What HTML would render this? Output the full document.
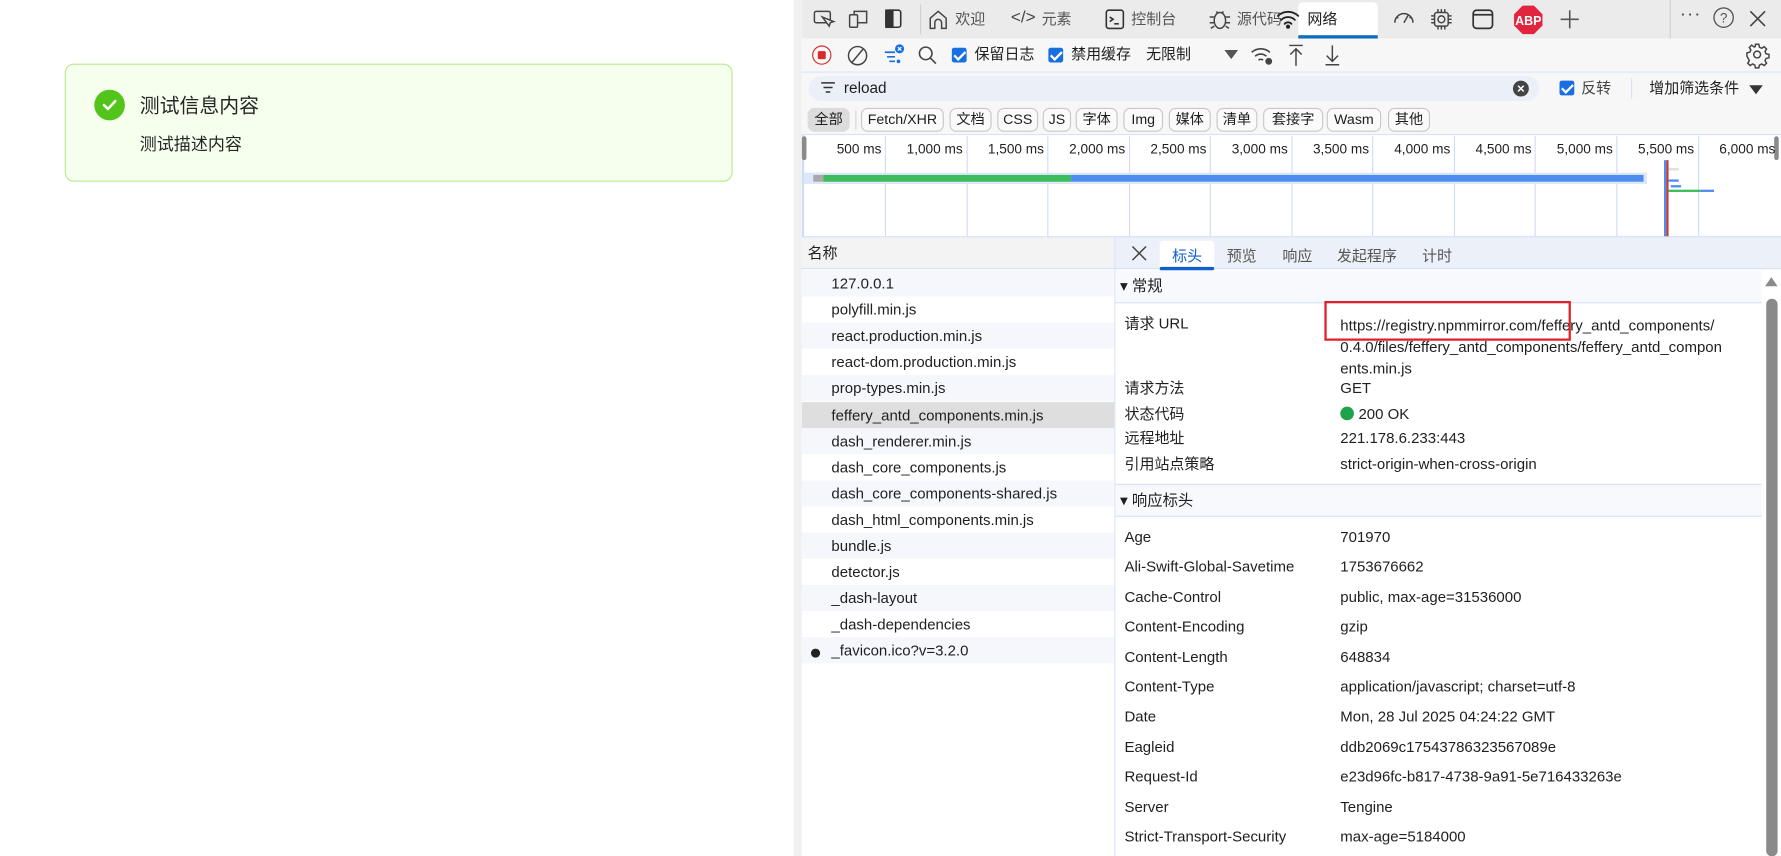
<!DOCTYPE html>
<html><head><meta charset="utf-8">
<style>
*{margin:0;padding:0;box-sizing:border-box}
html,body{width:1781px;height:856px;overflow:hidden;background:#fff}
body{font-family:"Liberation Sans","Noto Sans CJK SC",sans-serif;color:#1f1f1f}
#root{position:absolute;left:0;top:0;width:1568px;height:754px;transform:scale(1.13584);transform-origin:0 0;font-size:13.2px;line-height:16px}
.a{position:absolute}
.t{position:absolute;white-space:nowrap;line-height:16px}
svg{position:absolute;overflow:visible}
.chip{position:absolute;top:95px;height:21px;border:1px solid #c8c8c8;border-radius:6px;background:#fafafa;font-size:12.5px;line-height:19px;text-align:center}
.row{position:absolute;left:706px;width:275px;height:23px;line-height:23px;padding-left:26px}
.dl{position:absolute;left:990px;line-height:16px;white-space:nowrap}
.dv{position:absolute;left:1180px;white-space:nowrap;line-height:16px}
.cb{position:absolute;width:13px;height:13px;border-radius:2px;background:#1a6fe0}
.cb:after{content:"";position:absolute;left:4px;top:1px;width:4px;height:8px;border:solid #fff;border-width:0 2px 2px 0;transform:rotate(45deg)}
</style></head><body><div id="root">
<div class="a" style="left:0;top:0;width:699px;height:754px;background:#fff;border-radius:0 10px 0 0"></div>
<div class="a" style="left:699px;top:0;width:7px;height:754px;background:#f0f0f0"></div>
<div class="a" style="left:57px;top:56px;width:588px;height:104px;background:#f6ffed;border:1px solid #b7eb8f;border-radius:8px"></div>
<div class="a" style="left:83px;top:79px;width:27px;height:27px;border-radius:50%;background:#52c41a"></div>
<svg style="left:83px;top:79px" width="27" height="27"><path d="M8.5 13.5l3.5 3.5 6.5-7" stroke="#fff" stroke-width="2.2" fill="none" stroke-linecap="round" stroke-linejoin="round"/></svg>
<div class="t" style="left:123px;top:83px;font-size:17.5px;line-height:20px;color:#262626">测试信息内容</div>
<div class="t" style="left:123px;top:119px;font-size:15px;line-height:18px;color:#262626">测试描述内容</div>

<div class="a" style="left:706px;top:0;width:862px;height:754px;background:#fff"></div>
<div class="a" style="left:706px;top:0;width:862px;height:34px;background:#ebebeb"></div>
<div class="a" style="left:810px;top:4px;width:1px;height:26px;background:#cfcfcf"></div>
<div class="a" style="left:1470px;top:0;width:1px;height:34px;background:#cfcfcf"></div>
<div class="a" style="left:1143px;top:2px;width:70px;height:32px;background:#fff;border-radius:4px 4px 0 0"></div>
<div class="a" style="left:1143px;top:31px;width:70px;height:3px;background:#0f6cbd"></div>
<svg style="left:716px;top:9px" width="18" height="16" fill="none" stroke="#444" stroke-width="1.3"><rect x="1" y="1" width="14" height="10" rx="1.5"/><path d="M8 6l6 8 1-3 3-1z" fill="#ebebeb"/></svg>
<svg style="left:747px;top:8px" width="18" height="18" fill="none" stroke="#444" stroke-width="1.3"><rect x="1" y="5" width="7" height="11" rx="1"/><path d="M5 5V2h11v10h-8"/></svg>
<svg style="left:779px;top:8px" width="16" height="18" fill="none" stroke="#333" stroke-width="1.4"><rect x="1" y="1" width="13" height="15" rx="2"/><rect x="1" y="1" width="6" height="15" fill="#333"/></svg>
<svg style="left:817px;top:8px" width="18" height="18" fill="none" stroke="#444" stroke-width="1.3"><path d="M2 8L9 2l7 6v9h-4v-5a3 3 0 0 0-6 0v5H2z"/></svg>
<div class="t" style="left:841px;top:9px;color:#555">欢迎</div>
<div class="t" style="left:890px;top:8px;color:#444;font-size:15px">&lt;/&gt;</div>
<div class="t" style="left:917px;top:9px;color:#555">元素</div>
<svg style="left:973px;top:8px" width="17" height="18" fill="none" stroke="#333" stroke-width="1.4"><rect x="1" y="1" width="15" height="16" rx="2"/><path d="M4 7l3 2-3 2M8 13h4"/></svg>
<div class="t" style="left:996px;top:9px;color:#555">控制台</div>
<svg style="left:1064px;top:7px" width="20" height="20" fill="none" stroke="#444" stroke-width="1.3"><ellipse cx="10" cy="11" rx="5" ry="7"/><path d="M7 3l1 2M13 3l-1 2M1 8h4M15 8h4M1 13h4M15 13h4M2 18l3-2M18 18l-3-2"/></svg>
<div class="t" style="left:1089px;top:9px;color:#555">源代码</div>
<svg style="left:1124px;top:9px" width="20" height="16" fill="none" stroke="#222" stroke-width="1.6" stroke-linecap="round"><path d="M1 5a13 13 0 0 1 18 0M4 8.5a8.5 8.5 0 0 1 12 0M7 12a4 4 0 0 1 6 0"/><circle cx="10" cy="14.5" r="1" fill="#222"/></svg>
<div class="t" style="left:1151px;top:9px;color:#222">网络</div>
<svg style="left:1226px;top:9px" width="20" height="14" fill="none" stroke="#444" stroke-width="1.3"><path d="M2 11A8 8 0 0 1 18 11M10 11l4-7M4 6l1 1M16 6l-1 1"/></svg>
<svg style="left:1259px;top:7px" width="20" height="20" fill="none" stroke="#444" stroke-width="1.3"><rect x="4" y="4" width="12" height="12" rx="2"/><circle cx="10" cy="10" r="3"/><path d="M7 1v3M10 1v3M13 1v3M7 16v3M10 16v3M13 16v3M1 7h3M1 10h3M1 13h3M16 7h3M16 10h3M16 13h3"/></svg>
<svg style="left:1296px;top:8px" width="19" height="18" fill="none" stroke="#333" stroke-width="1.5"><rect x="1" y="1" width="17" height="16" rx="3"/><path d="M1 5h17"/></svg>
<svg style="left:1333px;top:5px" width="25" height="25"><polygon points="7.5,0 17.5,0 25,7.5 25,17.5 17.5,25 7.5,25 0,17.5 0,7.5" fill="#e1253f"/><text x="12.5" y="17" font-family="Liberation Sans" font-weight="bold" font-size="11" fill="#fff" text-anchor="middle">ABP</text></svg>
<svg style="left:1374px;top:9px" width="16" height="16" stroke="#555" stroke-width="1.4"><path d="M8 0v16M0 8h16"/></svg>
<div class="t" style="left:1479px;top:5px;font-size:16px;color:#444;letter-spacing:1px">···</div>
<svg style="left:1508px;top:6px" width="19" height="19" fill="none" stroke="#555" stroke-width="1.2"><circle cx="9.5" cy="9.5" r="8.5"/><text x="9.5" y="14" font-size="12" text-anchor="middle" fill="#555" stroke="none" font-family="Liberation Sans">?</text></svg>
<svg style="left:1540px;top:9px" width="15" height="15" stroke="#444" stroke-width="1.4"><path d="M1 1l13 13M14 1L1 14"/></svg>

<div class="a" style="left:706px;top:34px;width:862px;height:30px;background:#f7f7f7;border-bottom:1px solid #d6e2fb"></div>
<div class="a" style="left:715px;top:40px;width:17px;height:17px;border-radius:50%;border:1.6px solid #d92b2b"></div>
<div class="a" style="left:720px;top:45px;width:7px;height:7px;background:#d92b2b;border-radius:1px"></div>
<svg style="left:746px;top:40px" width="18" height="18" fill="none" stroke="#444" stroke-width="1.3"><circle cx="9" cy="9" r="8"/><path d="M4 15L14 3"/></svg>
<svg style="left:778px;top:38px" width="20" height="20" fill="none" stroke="#1a6fe0" stroke-width="1.5"><path d="M1 8h9M3 12h7M5 16h5"/><circle cx="14" cy="5" r="4" fill="#1a6fe0" stroke="none"/><path d="M12.5 3.5l3 3M15.5 3.5l-3 3" stroke="#fff" stroke-width="1.1"/><circle cx="13" cy="16" r="1.6" fill="#1a6fe0" stroke="none"/></svg>
<svg style="left:808px;top:40px" width="18" height="18" fill="none" stroke="#444" stroke-width="1.4"><circle cx="7" cy="7" r="5.5"/><path d="M11 11l5 5"/></svg>
<div class="cb" style="left:838px;top:42px"></div>
<div class="t" style="left:858px;top:40px">保留日志</div>
<div class="cb" style="left:923px;top:42px"></div>
<div class="t" style="left:943px;top:40px">禁用缓存</div>
<div class="t" style="left:1009px;top:40px">无限制</div>
<svg style="left:1078px;top:44px" width="12" height="8"><path d="M0 0h12L6 8z" fill="#555"/></svg>
<svg style="left:1101px;top:40px" width="22" height="18" fill="none" stroke="#444" stroke-width="1.4"><path d="M1 6a12 12 0 0 1 16 0M4 9.5a7.5 7.5 0 0 1 10 0M7 13a3 3 0 0 1 4 0"/><circle cx="16" cy="14" r="3" fill="#444" stroke="none"/></svg>
<svg style="left:1134px;top:39px" width="14" height="19" fill="none" stroke="#444" stroke-width="1.3"><path d="M1 1h12M7 4v15M2 9l5-5 5 5"/></svg>
<svg style="left:1166px;top:39px" width="14" height="19" fill="none" stroke="#444" stroke-width="1.3"><path d="M1 18h12M7 1v14M2 10l5 5 5-5"/></svg>
<svg style="left:1537px;top:38px" width="20" height="20" fill="none" stroke="#444" stroke-width="1.3"><circle cx="10" cy="10" r="3"/><path d="M8.5 1h3l.5 2.5 2 1 2.2-1.4 2.1 2.1-1.4 2.2 1 2 2.5.5v3l-2.5.5-1 2 1.4 2.2-2.1 2.1-2.2-1.4-2 1-.5 2.5h-3l-.5-2.5-2-1-2.2 1.4-2.1-2.1 1.4-2.2-1-2L1 11.5v-3l2.5-.5 1-2-1.4-2.2 2.1-2.1L7.4 3.4l1-.5z"/></svg>

<div class="a" style="left:706px;top:64px;width:862px;height:27px;background:#f7f7f7"></div>
<div class="a" style="left:712px;top:67px;width:643px;height:22px;background:#eaeff8;border-radius:11px"></div>
<svg style="left:723px;top:72px" width="12" height="10" stroke="#333" stroke-width="1.3"><path d="M0 1h12M2 5h8M4 9h4"/></svg>
<div class="t" style="left:743px;top:70px;font-size:13.5px">reload</div>
<div class="a" style="left:1332px;top:71px;width:14px;height:14px;border-radius:50%;background:#444"></div>
<svg style="left:1332px;top:71px" width="14" height="14" stroke="#fff" stroke-width="1.3"><path d="M4.5 4.5l5 5M9.5 4.5l-5 5"/></svg>
<div class="cb" style="left:1373px;top:71px"></div>
<div class="t" style="left:1392px;top:70px;color:#444">反转</div>
<div class="a" style="left:1436px;top:69px;width:1px;height:18px;background:#d6e2fb"></div>
<div class="t" style="left:1452px;top:70px">增加筛选条件</div>
<svg style="left:1540px;top:75px" width="12" height="8"><path d="M0 0h12L6 8z" fill="#333"/></svg>

<div class="a" style="left:706px;top:91px;width:862px;height:28px;background:#f7f7f7;border-bottom:1px solid #d6e2fb"></div>
<div class="chip" style="left:711px;width:37px;background:#dcdcdc;border-color:#dcdcdc">全部</div>
<div class="a" style="left:753px;top:97px;width:1px;height:17px;background:#d6d6d6"></div>
<div class="chip" style="left:758px;width:73px">Fetch/XHR</div>
<div class="chip" style="left:836px;width:37px">文档</div>
<div class="chip" style="left:878px;width:36px">CSS</div>
<div class="chip" style="left:918px;width:25px">JS</div>
<div class="chip" style="left:947px;width:37px">字体</div>
<div class="chip" style="left:989px;width:35px">Img</div>
<div class="chip" style="left:1029px;width:37px">媒体</div>
<div class="chip" style="left:1071px;width:36px">清单</div>
<div class="chip" style="left:1112px;width:53px">套接字</div>
<div class="chip" style="left:1168px;width:48px">Wasm</div>
<div class="chip" style="left:1222px;width:37px">其他</div>

<div class="a" style="left:706px;top:119px;width:862px;height:90px;background:#fff;border-bottom:1.5px solid #cfdcf5;border-left:2px solid #cfdcf5"></div>
<div class="a" style="left:706px;top:120px;width:4px;height:21px;background:#8a8a8a;border-radius:2px"></div>
<div class="a" style="left:1562px;top:120px;width:4px;height:21px;background:#8a8a8a;border-radius:2px"></div>
<div id="ticks"></div>
<div class="a" style="left:708px;top:152px;width:742px;height:10px;background:#dde7fa"></div>
<div class="a" style="left:716px;top:154px;width:9px;height:6px;background:#a9a9a9"></div>
<div class="a" style="left:725px;top:154px;width:218px;height:6px;background:#3cbc5c"></div>
<div class="a" style="left:943px;top:154px;width:504px;height:6px;background:#4f8cf0"></div>
<div class="a" style="left:1465px;top:141px;width:2px;height:67px;background:#4f8cf0"></div>
<div class="a" style="left:1467px;top:141px;width:1.5px;height:67px;background:#c43a3a"></div>
<div class="a" style="left:1469px;top:148px;width:9px;height:2px;background:#ddd"></div>
<div class="a" style="left:1469px;top:158px;width:9px;height:2px;background:#4f8cf0"></div>
<div class="a" style="left:1471px;top:163px;width:9px;height:2px;background:#4f8cf0"></div>
<div class="a" style="left:1469px;top:167px;width:28px;height:2px;background:#3cbc5c"></div>
<div class="a" style="left:1497px;top:167px;width:12px;height:2px;background:#4f8cf0"></div>

<div class="a" style="left:706px;top:209px;width:275px;height:28px;background:#f3f3f3;border-bottom:1px solid #d6e2fb"></div>
<div class="t" style="left:711px;top:215px">名称</div>
<div class="a" style="left:981px;top:209px;width:1px;height:545px;background:#d6e2fb"></div>
<div id="rows"></div>

<div class="a" style="left:982px;top:209px;width:586px;height:28px;background:#ecf0f9;border-bottom:1px solid #d6e2fb"></div>
<svg style="left:996px;top:216px" width="14" height="14" stroke="#444" stroke-width="1.3"><path d="M1 1l12 12M13 1L1 13"/></svg>
<div class="a" style="left:1021px;top:212px;width:48px;height:26px;background:#fff;border-radius:3px 3px 0 0"></div>
<div class="a" style="left:1021px;top:235px;width:48px;height:3px;background:#0f5fcc;border-radius:2px"></div>
<div class="t" style="left:1032px;top:218px;color:#0f5fcc">标头</div>
<div class="t" style="left:1080px;top:218px;color:#555">预览</div>
<div class="t" style="left:1129px;top:218px;color:#555">响应</div>
<div class="t" style="left:1177px;top:218px;color:#555">发起程序</div>
<div class="t" style="left:1252px;top:218px;color:#555">计时</div>

<div class="a" style="left:982px;top:238px;width:569px;height:29px;background:#f7f9fd;border-bottom:1px solid #d6e2fb"></div>
<div class="t" style="left:986px;top:244px;font-size:13.5px">▾ 常规</div>
<div class="dl" style="top:277px">请求 URL</div>
<div class="dv" style="top:277px;line-height:19px">https://registry.npmmirror.com/feffery_antd_components/<br>0.4.0/files/feffery_antd_components/feffery_antd_compon<br>ents.min.js</div>
<div class="a" style="left:1166px;top:265px;width:217px;height:35px;border:2px solid #e0202a"></div>
<div class="dl" style="top:334px">请求方法</div><div class="dv" style="top:334px">GET</div>
<div class="dl" style="top:357px">状态代码</div><div class="dv" style="top:357px"><span style="display:inline-block;width:12px;height:12px;border-radius:50%;background:#1ea34a;vertical-align:-1px;margin-right:4px"></span>200 OK</div>
<div class="dl" style="top:378px">远程地址</div><div class="dv" style="top:378px">221.178.6.233:443</div>
<div class="dl" style="top:401px">引用站点策略</div><div class="dv" style="top:401px">strict-origin-when-cross-origin</div>
<div class="a" style="left:982px;top:426px;width:569px;height:29px;background:#f7f9fd;border-top:1px solid #d6e2fb;border-bottom:1px solid #d6e2fb"></div>
<div class="t" style="left:986px;top:433px;font-size:13.5px">▾ 响应标头</div>
<div id="hdrs"></div>
<div class="a" style="left:1551px;top:238px;width:17px;height:516px;background:#fff"></div>
<svg style="left:1554px;top:244px" width="11" height="8"><path d="M0 8h11L5.5 0z" fill="#8a8a8a"/></svg>
<div class="a" style="left:1555px;top:263px;width:10px;height:491px;background:#8a8a8a;border-radius:5px"></div>
</div>
<script>
var r=document.getElementById('ticks'),h='';
var labels=['500 ms','1,000 ms','1,500 ms','2,000 ms','2,500 ms','3,000 ms','3,500 ms','4,000 ms','4,500 ms','5,000 ms','5,500 ms','6,000 ms'];
for(var i=0;i<12;i++){var x=779+71.55*i;
if(i<11)h+='<div class="a" style="left:'+x+'px;top:120px;width:1px;height:88px;background:#cfdcf5"></div>';
h+='<div class="t" style="left:'+(x-80)+'px;width:77px;text-align:right;top:123px;font-size:12px">'+labels[i]+'</div>';}
r.innerHTML=h;
var names=['127.0.0.1','polyfill.min.js','react.production.min.js','react-dom.production.min.js','prop-types.min.js','feffery_antd_components.min.js','dash_renderer.min.js','dash_core_components.js','dash_core_components-shared.js','dash_html_components.min.js','bundle.js','detector.js','_dash-layout','_dash-dependencies','_favicon.ico?v=3.2.0'];
h='';for(i=0;i<names.length;i++){var bg=i==5?'#dedede':(i%2==0?'#f5f7fc':'#fff');
h+='<div class="row" style="top:'+(238+i*23.1)+'px;background:'+bg+'">'+names[i]+'</div>';}
h+='<div class="a" style="left:714px;top:571px;width:8px;height:8px;border-radius:50%;background:#222"></div>';
document.getElementById('rows').innerHTML=h;
var hd=[['Age','701970'],['Ali-Swift-Global-Savetime','1753676662'],['Cache-Control','public, max-age=31536000'],['Content-Encoding','gzip'],['Content-Length','648834'],['Content-Type','application/javascript; charset=utf-8'],['Date','Mon, 28 Jul 2025 04:24:22 GMT'],['Eagleid','ddb2069c17543786323567089e'],['Request-Id','e23d96fc-b817-4738-9a91-5e716433263e'],['Server','Tengine'],['Strict-Transport-Security','max-age=5184000']];
h='';for(i=0;i<hd.length;i++){var y=465+i*26.4;h+='<div class="dl" style="top:'+y+'px">'+hd[i][0]+'</div><div class="dv" style="top:'+y+'px">'+hd[i][1]+'</div>';}
document.getElementById('hdrs').innerHTML=h;
</script>
</body></html>
